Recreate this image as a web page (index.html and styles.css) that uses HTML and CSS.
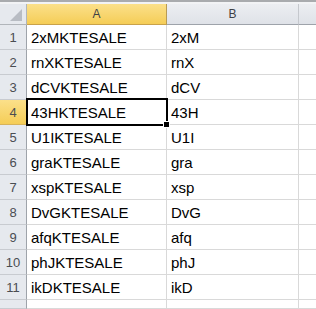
FILE: index.html
```html
<!DOCTYPE html>
<html lang="en">
<head>
    <meta charset="UTF-8">
    <title>Book1</title>
    <link rel="stylesheet" href="styles.css">
</head>
<body>
    <div class="topbar"></div>
    <div class="sheet">
        <div class="corner"><span class="tri"></span></div>
        <div class="colhead sel">A</div>
        <div class="colhead">B</div>
        <div class="colhead last"></div>

        <div class="rowhead">1</div><div class="cell">2xMKTESALE</div><div class="cell">2xM</div><div class="cell last"></div>
        <div class="rowhead">2</div><div class="cell">rnXKTESALE</div><div class="cell">rnX</div><div class="cell last"></div>
        <div class="rowhead">3</div><div class="cell">dCVKTESALE</div><div class="cell">dCV</div><div class="cell last"></div>
        <div class="rowhead sel">4</div><div class="cell active">43HKTESALE</div><div class="cell">43H</div><div class="cell last"></div>
        <div class="rowhead">5</div><div class="cell">U1IKTESALE</div><div class="cell">U1I</div><div class="cell last"></div>
        <div class="rowhead">6</div><div class="cell">graKTESALE</div><div class="cell">gra</div><div class="cell last"></div>
        <div class="rowhead">7</div><div class="cell">xspKTESALE</div><div class="cell">xsp</div><div class="cell last"></div>
        <div class="rowhead">8</div><div class="cell">DvGKTESALE</div><div class="cell">DvG</div><div class="cell last"></div>
        <div class="rowhead">9</div><div class="cell">afqKTESALE</div><div class="cell">afq</div><div class="cell last"></div>
        <div class="rowhead">10</div><div class="cell">phJKTESALE</div><div class="cell">phJ</div><div class="cell last"></div>
        <div class="rowhead">11</div><div class="cell">ikDKTESALE</div><div class="cell">ikD</div><div class="cell last"></div>
        <div class="rowhead"></div><div class="cell"></div><div class="cell"></div><div class="cell last"></div>
    </div>
</body>
</html>
```

FILE: styles.css
```css
body {
    margin: 0;
    background: #fff;
    font-family: "Liberation Sans", Arial, sans-serif;
    overflow: hidden;
}
.topbar {
    height: 2px;
    background: #a9abae;
    border-bottom: 2px solid #f2f3f5;
}
.sheet {
    display: grid;
    grid-template-columns: 27px 140px 132px 1fr;
    grid-template-rows: 21px repeat(11, 25px) 9px;
}
.corner {
    position: relative;
    background: #e6e9ee;
    border-right: 1px solid #b1b5ba;
    border-bottom: 1px solid #b1b5ba;
}
.corner .tri {
    position: absolute;
    right: 4px;
    bottom: 3px;
    width: 0;
    height: 0;
    border-left: 12px solid transparent;
    border-bottom: 12px solid #b8bcc3;
}
.colhead {
    display: flex;
    align-items: center;
    justify-content: center;
    background: linear-gradient(#eceef2, #dfe2e8);
    border-right: 1px solid #c5c8cd;
    border-bottom: 1px solid #9ea3aa;
    font-size: 12px;
    color: #3e4146;
}
.colhead.sel {
    background: linear-gradient(#fbe08a, #f5cd57);
    border-right-color: #b89b54;
    border-bottom-color: #c9a24a;
}
.colhead.last {
    border-right: none;
}
.rowhead {
    display: flex;
    align-items: center;
    justify-content: center;
    background: #e6e9ee;
    border-right: 1px solid #9ea3aa;
    border-bottom: 1px solid #c8cbd0;
    font-size: 13px;
    color: #4a4d52;
    padding-top: 1px;
}
.rowhead.sel {
    background: linear-gradient(#fbe08a, #f5cd57);
    border-bottom-color: #d7b35c;
}
.cell {
    position: relative;
    display: flex;
    align-items: center;
    padding: 1px 0 0 4px;
    border-right: 1px solid #d9d9d9;
    border-bottom: 1px solid #d9d9d9;
    font-size: 15px;
    color: #000;
    white-space: nowrap;
}
.cell.last {
    border-right: none;
}
.cell.active::after {
    content: "";
    position: absolute;
    left: -1px;
    top: -2px;
    right: -2px;
    bottom: -2px;
    border: 2px solid #000;
}
.cell.active::before {
    content: "";
    position: absolute;
    right: -4px;
    bottom: -4px;
    width: 5px;
    height: 5px;
    background: #000;
    border: 1px solid #fff;
    z-index: 1;
}
```
